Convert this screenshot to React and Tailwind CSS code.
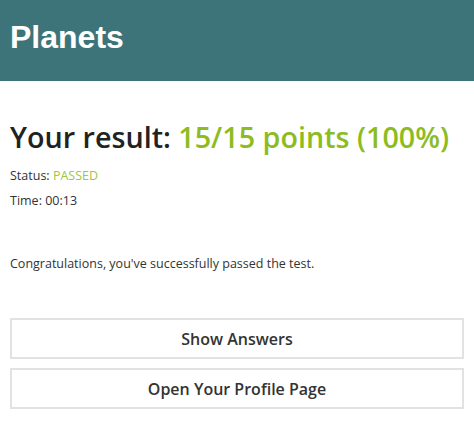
export default function App() {
  return (
    <div className="w-[474px] h-[444px] bg-white overflow-hidden" style={{ fontFamily: '"Open Sans", sans-serif' }}>
      <div className="h-[81px] bg-[#3d7479] px-[10px] pt-[21px]">
        <h1 className="text-[32px] leading-none font-bold text-white" style={{ fontFamily: '"Liberation Sans", Arial, sans-serif' }}>Planets</h1>
      </div>
      <div className="px-[10px]">
        <div className="mt-[42px] text-[28.7px] leading-none font-semibold text-[#222]">
          Your result: <span className="text-[#8cbc1f]">15/15 points (100%)</span>
        </div>
        <div className="mt-[18px] text-[12.5px] leading-none text-[#333]">
          Status: <span className="text-[#9cc63f]">PASSED</span>
        </div>
        <div className="mt-[13px] text-[12.5px] leading-none text-[#333]">Time: 00:13</div>
        <div className="mt-[50px] text-[12.5px] leading-none text-[#333]">Congratulations, you've successfully passed the test.</div>
        <div className="mt-[48px] flex flex-col gap-[9px]">
          <button className="h-[41px] w-full border-2 border-[#e2e2e2] bg-white text-[16px] font-semibold text-[#333]">Show Answers</button>
          <button className="h-[41px] w-full border-2 border-[#e2e2e2] bg-white text-[16px] font-semibold text-[#333]">Open Your Profile Page</button>
        </div>
      </div>
    </div>
  );
}
